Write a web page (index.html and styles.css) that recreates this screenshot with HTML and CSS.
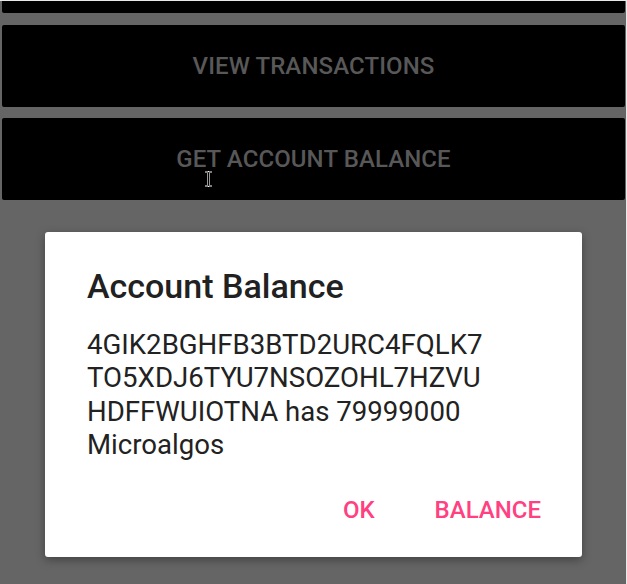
FILE: index.html
```html
<!DOCTYPE html>
<html lang="en">
<head>
  <meta charset="UTF-8">
  <meta name="viewport" content="width=device-width, initial-scale=1.0">
  <title>Account Balance</title>
  <link rel="stylesheet" href="styles.css">
</head>
<body>
  <div class="screen">
    <!-- buttons behind the dimmed overlay -->
    <div class="menu">
      <div class="btn btn-stub"></div>
      <div class="btn">View Transactions</div>
      <div class="btn btn-next">Get Account Balance</div>
    </div>

    <svg class="cursor" width="9" height="16" viewBox="0 0 9 16">
      <path d="M1 1h3l0.5 0.5L5 1h3M4.5 1.5v13M1 15h3l0.5-0.5L5 15h3" fill="none" stroke="#fff" stroke-width="2.2"/>
      <path d="M1 1h3l0.5 0.5L5 1h3M4.5 1.5v13M1 15h3l0.5-0.5L5 15h3" fill="none" stroke="#000" stroke-width="1"/>
    </svg>

    <div class="dialog">
      <h2 class="dialog-title">Account Balance</h2>
      <p class="dialog-message">4GIK2BGHFB3BTD2URC4FQLK7TO5XDJ6TYU7NSOZOHL7HZVUHDFFWUIOTNA has 79999000 Microalgos</p>
      <div class="dialog-actions">
        <span class="action">OK</span>
        <span class="action">Balance</span>
      </div>
    </div>
  </div>
</body>
</html>
```

FILE: styles.css
```css
/* Dimmed app screen with an alert dialog on top */
body {
  margin: 0;
  background-color: #e9e9e9;
  font-family: Roboto, "Noto Sans", sans-serif;
}

.screen {
  position: relative;
  width: 626px;
  height: 583px;
  margin-top: 1px;
  padding: 0 1px 0 2px;
  box-sizing: border-box;
  background-color: #656565; /* overlay grey */
  overflow: hidden;
}

.menu {
  display: flex;
  flex-direction: column;
}

.btn {
  height: 82px;
  margin-top: 12px;
  display: flex;
  align-items: center;
  justify-content: center;
  background-color: #000;
  border-radius: 2px;
  color: #585858; /* dimmed label */
  font-size: 24px;
  font-weight: 500;
  letter-spacing: 0.1px;
  text-transform: uppercase;
}

.btn-stub {
  height: 12px;
  margin-top: 0;
  border-radius: 0 0 2px 2px;
}

.btn-next {
  margin-top: 11px;
}

.cursor {
  position: absolute;
  left: 204px;
  top: 170px;
}

.dialog {
  width: 537px;
  margin: 32px 0 0 43px;
  padding: 34px 0 33px 42px;
  box-sizing: border-box;
  background-color: #fff;
  border-radius: 3px;
  box-shadow: 0 3px 10px rgba(0, 0, 0, 0.35);
}

.dialog-title {
  margin: 0;
  font-size: 34px;
  font-weight: 500;
  line-height: 40px;
  color: #212121;
}

.dialog-message {
  width: 400px;
  margin: 22px 0 0;
  font-size: 27.6px;
  line-height: 33.3px;
  color: #222;
  overflow-wrap: anywhere;
}

.dialog-actions {
  display: flex;
  justify-content: flex-end;
  gap: 60px;
  margin-top: 35px;
  padding-right: 41px;
}

.action {
  font-size: 24px;
  font-weight: 500;
  line-height: 28px;
  color: #ff4081; /* accent pink */
  text-transform: uppercase;
}
```
